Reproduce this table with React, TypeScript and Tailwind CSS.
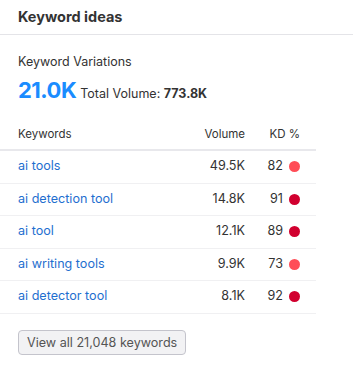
import React from 'react';

const rows = [
  { keyword: 'ai tools', volume: '49.5K', kd: 82, dot: 'bg-[#ff4d57]' },
  { keyword: 'ai detection tool', volume: '14.8K', kd: 91, dot: 'bg-[#d1002f]' },
  { keyword: 'ai tool', volume: '12.1K', kd: 89, dot: 'bg-[#d1002f]' },
  { keyword: 'ai writing tools', volume: '9.9K', kd: 73, dot: 'bg-[#ff4d57]' },
  { keyword: 'ai detector tool', volume: '8.1K', kd: 92, dot: 'bg-[#d1002f]' },
];

export default function App() {
  return (
    <div
      className="w-[353px] h-[373px] bg-white text-[#333] overflow-hidden"
      style={{ fontFamily: 'Inter, "Noto Sans", sans-serif' }}
    >
      <div className="h-[35px] border-b border-[#e4e4e8] px-[18px] flex items-center">
        <h2 className="text-[14.5px] font-bold text-[#333] leading-none pt-px">Keyword ideas</h2>
      </div>

      <div className="px-[18px] pt-[19px]">
        <div className="text-[12.5px] leading-[16px] text-[#333]">Keyword Variations</div>
        <div className="flex items-baseline mt-[6px] h-[28px]">
          <span className="text-[22px] font-bold text-[#1a8cff] leading-[28px] tracking-[-0.5px]">21.0K</span>
          <span className="text-[12.5px] ml-[4px] text-[#333] leading-[16px]">
            Total Volume: <span className="font-bold">773.8K</span>
          </span>
        </div>
      </div>

      <div className="w-[316px] mt-[14px]">
        <div className="h-[33px] pt-[3px] flex items-center border-b-2 border-[#e8e8ec] text-[11.5px] text-[#333] pl-[18px] pr-[16px]">
          <div className="flex-1">Keywords</div>
          <div className="w-[80px] text-right">Volume</div>
          <div className="w-[55px] text-right">KD %</div>
        </div>
        {rows.map((r) => (
          <div
            key={r.keyword}
            className="h-[32.5px] flex items-center border-b border-[#f0f0f2] text-[12.6px] pl-[18px] pr-[16px]"
          >
            <div className="flex-1 text-[#1f6fcf]">{r.keyword}</div>
            <div className="w-[80px] text-right text-[#333]">{r.volume}</div>
            <div className="w-[55px] flex items-center justify-end gap-[6px] text-[#333]">
              <span>{r.kd}</span>
              <span className={`w-[11px] h-[11px] rounded-full ${r.dot}`} />
            </div>
          </div>
        ))}
      </div>

      <div className="px-[18px] mt-[15px]">
        <button className="h-[25px] px-[8px] rounded-[4px] border border-[#c4c4cc] bg-[#f2f2f4] text-[12.6px] text-[#555]">
          View all 21,048 keywords
        </button>
      </div>
    </div>
  );
}
